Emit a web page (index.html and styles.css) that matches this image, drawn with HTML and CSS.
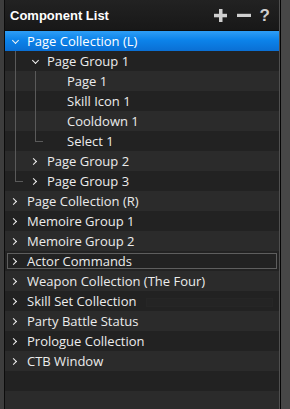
FILE: index.html
```html
<!doctype html>
<html lang="en">
<head>
  <meta charset="UTF-8" />
  <title>Component List</title>
  <link rel="stylesheet" href="styles.css">
</head>
<body>
  <div class="frame">
    <div class="panel">
      <header class="panel-header">
        <h1>Component List</h1>
        <div class="tools">
          <svg class="tool" width="13" height="13" viewBox="0 0 13 13"><rect x="5" y="0" width="3.5" height="13" /><rect x="0" y="4.8" width="13" height="3.5" /></svg>
          <svg class="tool" width="14" height="13" viewBox="0 0 14 13"><rect x="0" y="4.8" width="14" height="3.2" /></svg>
          <span class="tool-help">?</span>
        </div>
      </header>

      <ul class="tree">
        <li>
          <div class="row selected"><span class="twisty open"></span>Page Collection (L)</div>
          <ul class="children d0">
            <li>
              <div class="row d1"><span class="twisty open"></span>Page Group 1</div>
              <ul class="children d1">
                <li><div class="row d2"><span class="twisty"></span>Page 1</div></li>
                <li><div class="row d2"><span class="twisty"></span>Skill Icon 1</div></li>
                <li><div class="row d2"><span class="twisty"></span>Cooldown 1</div></li>
                <li><div class="row d2"><span class="twisty"></span>Select 1</div></li>
              </ul>
            </li>
            <li><div class="row d1"><span class="twisty closed"></span>Page Group 2</div></li>
            <li><div class="row d1"><span class="twisty closed"></span>Page Group 3</div></li>
          </ul>
        </li>
        <li><div class="row"><span class="twisty closed"></span>Page Collection (R)</div></li>
        <li><div class="row"><span class="twisty closed"></span>Memoire Group 1</div></li>
        <li><div class="row"><span class="twisty closed"></span>Memoire Group 2</div></li>
        <li><div class="row focused"><span class="twisty closed"></span>Actor Commands</div></li>
        <li><div class="row"><span class="twisty closed"></span>Weapon Collection (The Four)</div></li>
        <li><div class="row"><span class="twisty closed"></span>Skill Set Collection<span class="edit-box"></span></div></li>
        <li><div class="row"><span class="twisty closed"></span>Party Battle Status</div></li>
        <li><div class="row"><span class="twisty closed"></span>Prologue Collection</div></li>
        <li><div class="row"><span class="twisty closed"></span>CTB Window</div></li>
      </ul>
    </div>
    <div class="scroll-track"></div>
  </div>
</body>
</html>
```

FILE: styles.css
```css
html, body {
  margin: 0;
  padding: 0;
  height: 100%;
  background-color: #3d3d3d;
  overflow: hidden;
}

.frame {
  display: flex;
  height: 100%;
  margin-left: 4px;
  border-left: 1px solid #0c0c0c;
}

.panel {
  width: 274px;
  flex: none;
  display: flex;
  flex-direction: column;
  background-color: #2b2b2b;
  border-right: 1px solid #505050;
}

.scroll-track {
  flex: 1;
  border-left: 1px solid #050505;
  background-color: #474747;
}

/* header */
.panel-header {
  height: 30px;
  flex: none;
  display: flex;
  align-items: center;
  justify-content: space-between;
  padding: 0 9px 0 5px;
  background: linear-gradient(#222, #181818);
  border-bottom: 1px solid #0e0e0e;
}

.panel-header h1 {
  margin: 0;
  font-family: "Liberation Sans", Arial, sans-serif;
  font-size: 13px;
  font-weight: bold;
  color: #fff;
}

.tools {
  display: flex;
  align-items: center;
  gap: 10px;
  margin-top: 1px;
}

.tool {
  fill: #cfcfcf;
  display: block;
}

.tool-help {
  font-family: "Liberation Sans", Arial, sans-serif;
  font-size: 17px;
  font-weight: bold;
  color: #cfcfcf;
  line-height: 14px;
  margin-left: -1px;
}

/* tree */
.tree,
.tree ul {
  list-style: none;
  margin: 0;
  padding: 0;
}

.tree {
  flex: 1;
  background: repeating-linear-gradient(to bottom, #2b2b2b 0 20px, #222 20px 40px);
}

.row {
  position: relative;
  height: 20px;
  display: flex;
  align-items: center;
  font-family: "Open Sans", "Noto Sans", sans-serif;
  font-size: 13px;
  color: #ececec;
  white-space: nowrap;
}

.row.d1 { padding-left: 20px; }
.row.d2 { padding-left: 40px; }

.row.selected {
  background: linear-gradient(#2e9ef6, #0c83ea 45%, #0a6fd4);
  color: #fff;
}

.row.focused {
  outline: 1px solid #5e5e5e;
  outline-offset: -3px;
}

.twisty {
  width: 22px;
  height: 20px;
  flex: none;
  position: relative;
}

.twisty.closed::before,
.twisty.open::before {
  content: "";
  position: absolute;
  width: 4px;
  height: 4px;
  border-right: 1.8px solid #f4f4f4;
  border-bottom: 1.8px solid #f4f4f4;
}

.twisty.closed::before {
  left: 6px;
  top: 7.5px;
  transform: rotate(-45deg);
}

.twisty.open::before {
  left: 7.5px;
  top: 6.5px;
  transform: rotate(45deg);
}

.edit-box {
  flex: 1;
  height: 7px;
  margin: 2px 6px 0 10px;
  border: 1px solid #262626;
  background-color: #242424;
}

/* guide lines */
.children {
  position: relative;
}

.children::before {
  content: "";
  position: absolute;
  top: 0;
  bottom: 9px;
  width: 7px;
  border-left: 1px solid #5a5a5a;
  border-bottom: 1px solid #5a5a5a;
}

.children.d0::before { left: 10px; }
.children.d1::before { left: 30px; }
```
